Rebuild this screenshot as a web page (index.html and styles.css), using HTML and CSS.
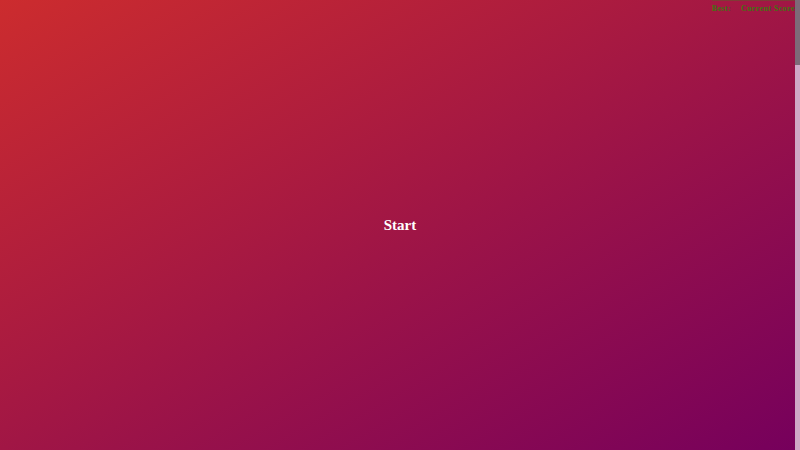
FILE: index.html
```html
<!DOCTYPE html>
<html lang="en">
<head>
    <meta charset="UTF-8">
    <meta name="viewport" content="width=device-width, initial-scale=1.0">
    <title>Start</title>
    <link rel="stylesheet" href="styles.css">
</head>
<body>
    <div class="page">
        <div class="stage">
            <div class="scores">
                <span>Best:</span>
                <span>Current Score</span>
            </div>
            <button class="start">Start</button>
        </div>
        <div class="scrollbar">
            <div class="scrollbar-thumb"></div>
        </div>
    </div>
</body>
</html>
```

FILE: styles.css
```css
* {
    box-sizing: border-box;
    margin: 0;
    padding: 0;
}

html, body {
    height: 100%;
    overflow: hidden;
}

body {
    font-family: "Liberation Serif", serif;
}

.page {
    display: flex;
    height: 100%;
}

.stage {
    flex: 1;
    display: flex;
    align-items: center;
    justify-content: center;
    position: relative;
    padding-left: 5px;
    background: linear-gradient(to bottom right, #cc2c2e, #76005c);
}

.scores {
    position: absolute;
    top: 0;
    right: 0;
    display: flex;
    gap: 10px;
    padding-top: 3px;
    border-top: 1px solid rgba(63, 122, 28, 0.35);
    color: #3f7410;
    font-size: 8px;
    font-weight: bold;
    letter-spacing: 0.4px;
    line-height: 9px;
}

.start {
    background: none;
    border: none;
    color: #fff;
    font-family: inherit;
    font-size: 15px;
    font-weight: bold;
}

.scrollbar {
    width: 5px;
    background: #cfa8c6;
}

.scrollbar-thumb {
    height: 65px;
    background: #7d6a78;
}
```
